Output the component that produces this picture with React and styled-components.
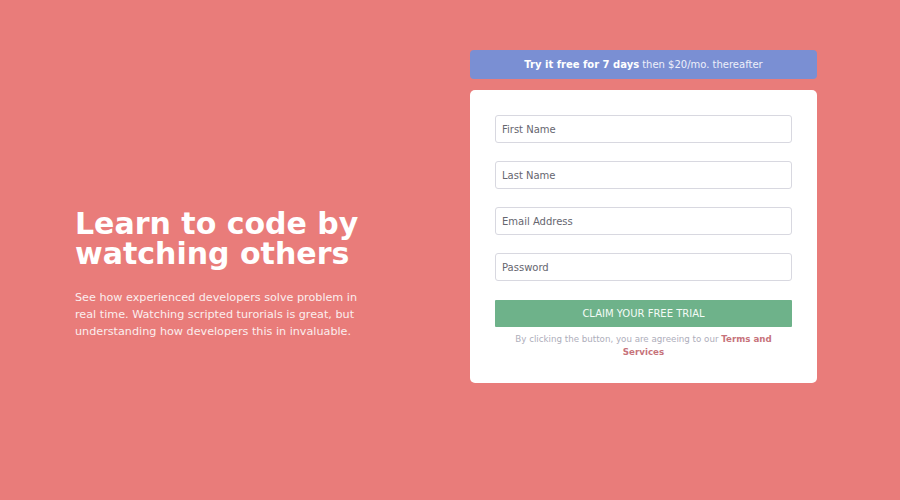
import React from 'react';
import styled, { createGlobalStyle } from 'styled-components';

const GlobalStyle = createGlobalStyle`
	html, body {
		margin: 0;
		padding: 0;
		background: #e97c7a;
		font-family: "DejaVu Sans", Verdana, sans-serif;
	}
	* { box-sizing: border-box; }
`

const Page = styled.main`
	width: 900px;
	height: 500px;
	display: flex;
	justify-content: space-between;
	align-items: flex-start;
	padding: 50px 83px 0 75px;
	background: #e97c7a;
`
const Intro = styled.section`
	width: 292px;
	margin-top: 159px;
	color: #fff;
`
const Heading = styled.h1`
	margin: 0;
	font-size: 30px;
	line-height: 30px;
	font-weight: 700;
`
const Lead = styled.p`
	margin: 20px 0 0;
	font-size: 11.2px;
	line-height: 17px;
	color: #fbeeee;
`
const Side = styled.section`
	width: 347px;
	display: flex;
	flex-direction: column;
	gap: 11px;
`
const Banner = styled.div`
	height: 29px;
	border-radius: 4px;
	background: #7a8fd3;
	color: #fff;
	font-size: 10px;
	display: flex;
	align-items: center;
	justify-content: center;
	b { font-weight: 700; margin-right: 3px; }
	span { color: #eef0fa; }
`
const Card = styled.form`
	background: #fff;
	border-radius: 5px;
	padding: 25px 25px 25px;
	display: flex;
	flex-direction: column;
`
const Field = styled.input`
	flex-shrink: 0;
	height: 28px;
	width: 100%;
	border: 1px solid #d8d8e0;
	border-radius: 3px;
	padding: 0 6px;
	margin-bottom: 18px;
	font-family: inherit;
	font-size: 10px;
	color: #555;
	outline: none;
	&::placeholder { color: #66666f; }
`
const Submit = styled.button`
	flex-shrink: 0;
	height: 27px;
	width: 100%;
	margin-top: 1px;
	border: none;
	border-radius: 1px;
	background: #6eb28a;
	color: #f4fbf6;
	font-family: inherit;
	font-size: 10px;
	text-transform: uppercase;
	cursor: pointer;
`
const Terms = styled.p`
	margin: 6px 0 0;
	text-align: center;
	font-size: 8.7px;
	line-height: 12.5px;
	color: #aeaebb;
	a {
		color: #c7737b;
		font-weight: 700;
		text-decoration: none;
	}
`

export default function App() {
	return (
		<>
			<GlobalStyle />
			<Page>
				<Intro>
					<Heading>Learn to code by watching others</Heading>
					<Lead>
						See how experienced developers solve problem in real time. Watching scripted turorials is great, but understanding how developers this in invaluable.
					</Lead>
				</Intro>
				<Side>
					<Banner><b>Try it free for 7 days</b><span>then $20/mo. thereafter</span></Banner>
					<Card onSubmit={e => e.preventDefault()}>
						<Field type="text" placeholder="First Name" />
						<Field type="text" placeholder="Last Name" />
						<Field type="email" placeholder="Email Address" />
						<Field type="password" placeholder="Password" />
						<Submit type="submit">Claim your free trial</Submit>
						<Terms>
							By clicking the button, you are agreeing to our <a href="#">Terms and Services</a>
						</Terms>
					</Card>
				</Side>
			</Page>
		</>
	);
}
